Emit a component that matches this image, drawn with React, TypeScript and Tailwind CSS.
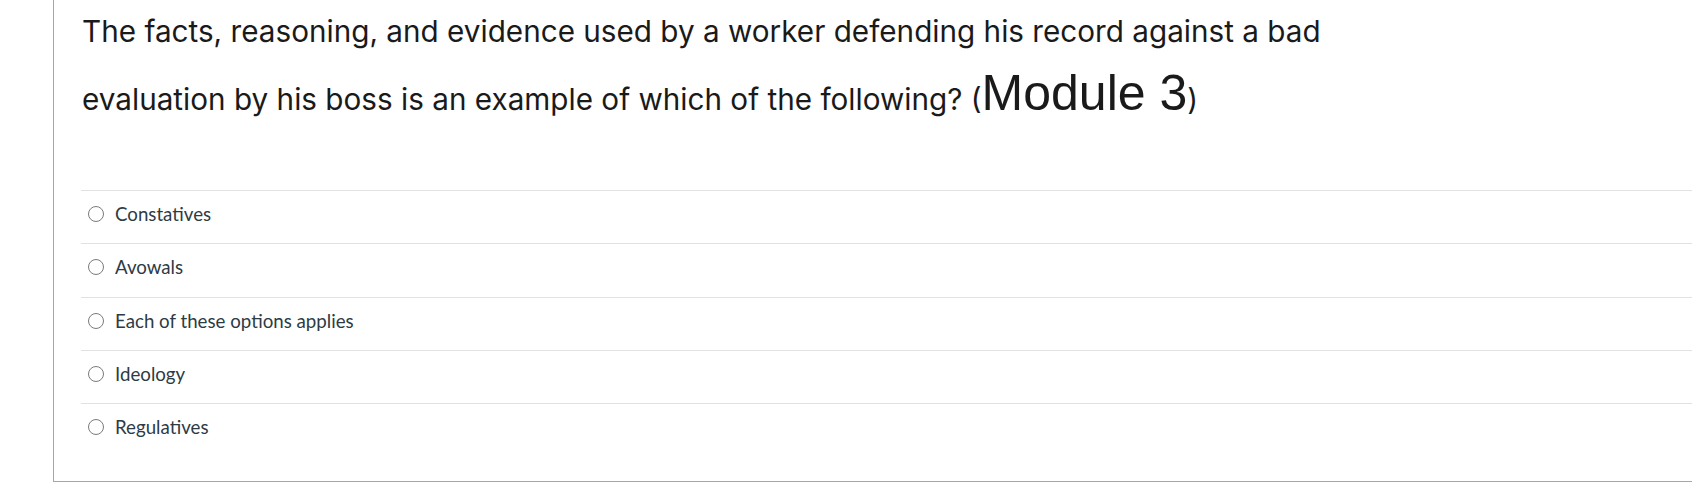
import React from "react";

const answers = [
  "Constatives",
  "Avowals",
  "Each of these options applies",
  "Ideology",
  "Regulatives",
];

function AnswerRow({ label }: { label: string }) {
  return (
    <label className="flex h-[53.25px] items-center gap-[11px] border-t border-[#dfe1e3] pb-[6px] pl-[7px]">
      <span className="h-[16px] w-[16px] shrink-0 rounded-full border-[1.3px] border-[#767b80] bg-white" />
      <span className="text-[18.7px] text-[#2d3b45] [font-family:Lato,'Noto_Sans',sans-serif]">
        {label}
      </span>
    </label>
  );
}

export default function App() {
  return (
    <main className="h-[482px] w-full overflow-hidden bg-white">
      <div className="ml-[53px] h-[482px] border-b border-l border-[#a6a6a6]">
        <div className="pl-[28px] pt-[8px] text-[29.7px] text-[#1a1a1a] [font-family:Inter,'Noto_Sans',sans-serif]">
          <p className="h-[46px] leading-[46px]">
            The facts, reasoning, and evidence used by a worker defending his record against a bad
          </p>
          <p className="mt-[14px] flex h-[60px] items-baseline">
            <span>evaluation by his boss is an example of which of the following? (</span>
            <span className="text-[50px] leading-none [font-family:'Liberation_Sans',Arial,sans-serif]">
              Module 3
            </span>
            <span>)</span>
          </p>
        </div>

        <div className="ml-[27px] mt-[62px]">
          {answers.map((a) => (
            <AnswerRow key={a} label={a} />
          ))}
        </div>
      </div>
    </main>
  );
}
